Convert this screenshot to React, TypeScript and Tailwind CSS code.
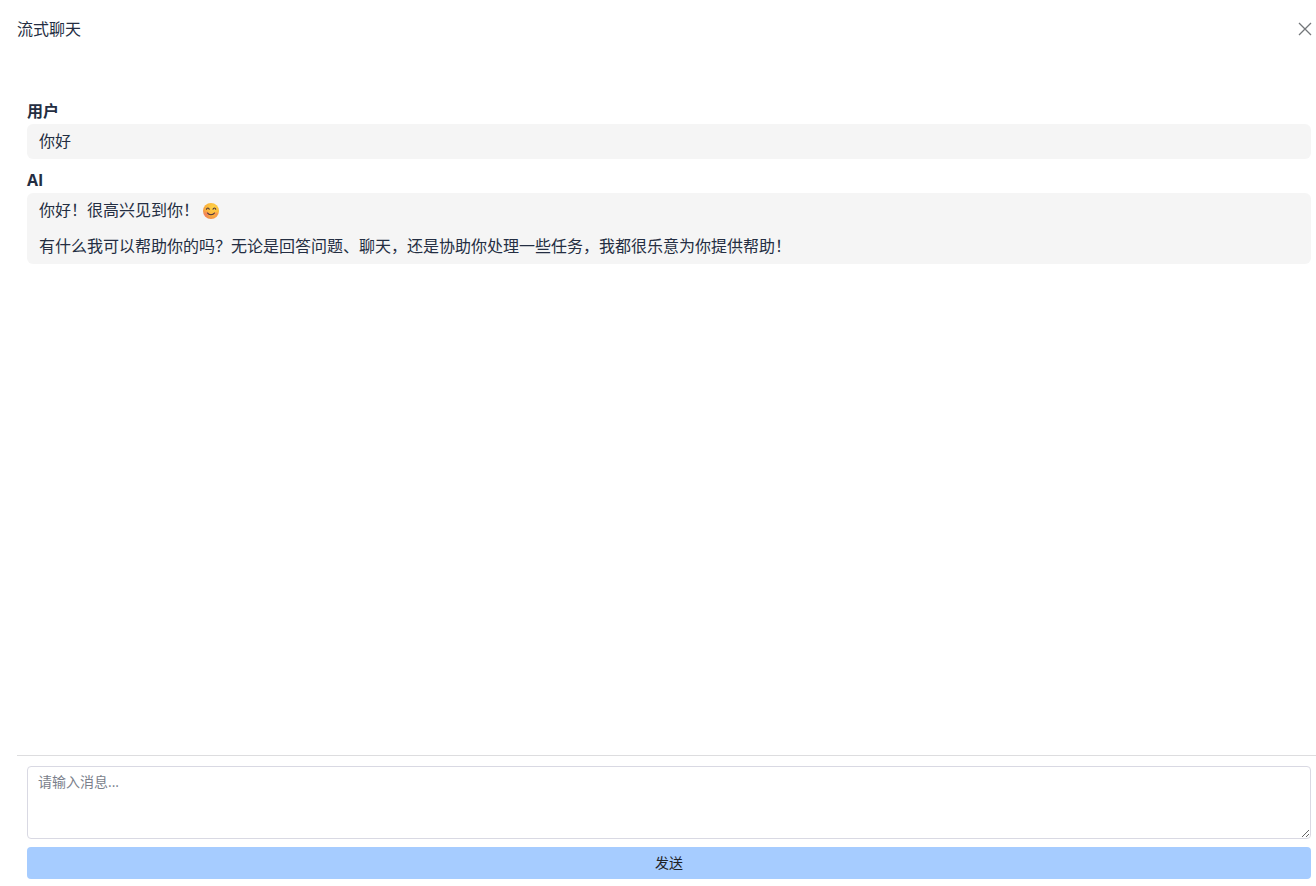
import { useState } from "react";

interface Message {
  role: string;
  lines: string[];
  smile?: boolean;
}

const messages: Message[] = [
  { role: "用户", lines: ["你好"] },
  {
    role: "AI",
    lines: [
      "你好！很高兴见到你！",
      "有什么我可以帮助你的吗？无论是回答问题、聊天，还是协助你处理一些任务，我都很乐意为你提供帮助！",
    ],
    smile: true,
  },
];

function SmileIcon() {
  return (
    <svg viewBox="0 0 32 32" className="inline-block w-4 h-4 align-[-3px]" role="img" aria-label="微笑">
      <defs>
        <radialGradient id="face" cx="0.65" cy="0.3" r="0.75">
          <stop offset="0" stopColor="#ffd54a" />
          <stop offset="0.6" stopColor="#fbb53a" />
          <stop offset="1" stopColor="#ef8a4a" />
        </radialGradient>
        <radialGradient id="blush">
          <stop offset="0" stopColor="#f6607e" stopOpacity="0.5" />
          <stop offset="1" stopColor="#f6607e" stopOpacity="0" />
        </radialGradient>
      </defs>
      <circle cx="16" cy="16" r="16" fill="url(#face)" />
      <circle cx="7" cy="22" r="7" fill="url(#blush)" />
      <circle cx="26" cy="22" r="5" fill="url(#blush)" />
      <g fill="none" stroke="#493340" strokeWidth="2.2" strokeLinecap="round">
        <path d="M7 12.500c1-3.500 4.500-3.500 5.500 0" />
        <path d="M20 12.500c1-3.500 4.500-3.500 5.500 0" />
        <path d="M9 20c3 4.500 11 4.500 14 0" />
      </g>
    </svg>
  );
}

function ChatMessage({ role, lines, smile }: Message) {
  return (
    <div>
      <div className="font-bold">{role}</div>
      <div className="flex flex-col gap-[11px] rounded-md bg-[#f5f5f5] px-3 py-[5px]">
        {lines.map((line, index) => (
          <p key={line}>
            {line}
            {smile && index === 0 && <> <SmileIcon /></>}
          </p>
        ))}
      </div>
    </div>
  );
}

export default function App() {
  const [input, setInput] = useState("");

  return (
    <div className="flex min-h-screen flex-col bg-white pl-[17px] font-['Open_Sans','Noto_Sans_CJK_SC',sans-serif] text-base leading-[25px] text-[#242e42]">
      {/* Header */}
      <header className="flex h-[58px] items-center justify-between">
        <h1>流式聊天</h1>
        <button type="button" aria-label="关闭" className="flex h-6 w-6 items-center justify-end pr-1 text-[#73767a]">
          <svg viewBox="0 0 14 14" className="h-[14px] w-[14px]" fill="none" stroke="currentColor" strokeWidth="1.3">
            <path d="M1 1l12 12M13 1L1 13" />
          </svg>
        </button>
      </header>

      {/* Messages */}
      <main className="flex flex-1 flex-col gap-[9px] pt-[41px] pr-[5px] pl-[10px]">
        {messages.map((message) => (
          <ChatMessage key={message.role} {...message} />
        ))}
      </main>

      {/* Input area */}
      <form
        className="flex flex-col gap-2 border-t border-[#dddddf] pt-[10px] pr-[5px] pb-[7px] pl-[10px]"
        onSubmit={(event) => event.preventDefault()}
      >
        <textarea
          rows={3}
          aria-label="消息"
          placeholder="请输入消息..."
          value={input}
          onChange={(event) => setInput(event.target.value)}
          className="block w-full resize-y rounded border border-[#d9d9e3] px-[10px] py-1 text-sm leading-[21px] outline-none placeholder:text-[#7b7f8c]"
        />
        <button type="submit" className="h-8 rounded bg-[#a6ccff] text-sm text-[#1f2225]">
          发送
        </button>
      </form>
    </div>
  );
}
